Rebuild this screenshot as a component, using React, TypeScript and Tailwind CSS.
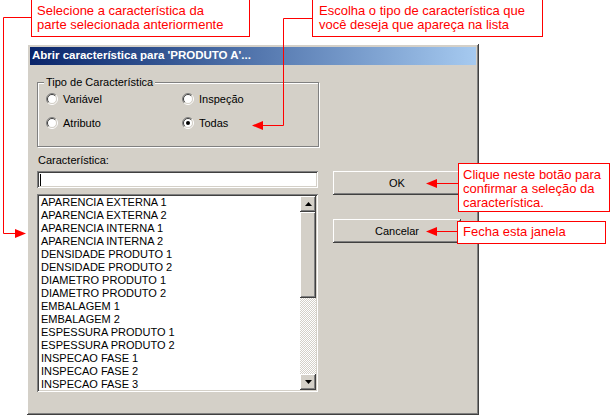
import React from 'react';

const items = [
  'APARENCIA EXTERNA 1',
  'APARENCIA EXTERNA 2',
  'APARENCIA INTERNA 1',
  'APARENCIA INTERNA 2',
  'DENSIDADE PRODUTO 1',
  'DENSIDADE PRODUTO 2',
  'DIAMETRO PRODUTO 1',
  'DIAMETRO PRODUTO 2',
  'EMBALAGEM 1',
  'EMBALAGEM 2',
  'ESPESSURA PRODUTO 1',
  'ESPESSURA PRODUTO 2',
  'INSPECAO FASE 1',
  'INSPECAO FASE 2',
  'INSPECAO FASE 3',
];

// classic win9x bevels
const raised =
  'shadow-[inset_-1px_-1px_#404040,inset_1px_1px_#ffffff,inset_-2px_-2px_#808080,inset_2px_2px_#d4d0c8]';
const sunken =
  'shadow-[inset_1px_1px_#808080,inset_-1px_-1px_#ffffff,inset_2px_2px_#404040,inset_-2px_-2px_#d4d0c8]';

function Radio({ checked }: { checked?: boolean }) {
  return (
    <svg width="12" height="12" viewBox="0 0 12 12" className="shrink-0">
      <circle cx="6" cy="6" r="4.5" fill="#ffffff" />
      <path d="M9.9 2.1 A5.5 5.5 0 0 0 2.1 9.9" fill="none" stroke="#808080" />
      <path d="M2.1 9.9 A5.5 5.5 0 0 0 9.9 2.1" fill="none" stroke="#ffffff" />
      <path d="M9.2 2.8 A4.5 4.5 0 0 0 2.8 9.2" fill="none" stroke="#404040" />
      <path d="M2.8 9.2 A4.5 4.5 0 0 0 9.2 2.8" fill="none" stroke="#d4d0c8" />
      {checked && <circle cx="6" cy="6" r="2" fill="#000000" />}
    </svg>
  );
}

function RadioOption({ label, checked }: { label: string; checked?: boolean }) {
  return (
    <div className="flex items-center gap-[5px] w-[136px]">
      <Radio checked={checked} />
      <span>{label}</span>
    </div>
  );
}

function ScrollArrow({ down }: { down?: boolean }) {
  return (
    <div className={`h-[16px] w-[16px] bg-[#d4d0c8] flex items-center justify-center ${raised}`}>
      <svg width="7" height="4" viewBox="0 0 7 4">
        {down ? <polygon points="0,0 7,0 3.5,4" fill="#000" /> : <polygon points="0,4 7,4 3.5,0" fill="#000" />}
      </svg>
    </div>
  );
}

function Callout({ className, children }: { className: string; children: React.ReactNode }) {
  return (
    <div
      className={`absolute bg-white border border-[#ff0000] text-[#ff0000] text-[13px] leading-[14px] font-['Liberation_Sans',Arial,sans-serif] ${className}`}
    >
      {children}
    </div>
  );
}

export default function App() {
  return (
    <div className="relative w-[610px] h-[416px] bg-white overflow-hidden font-['Liberation_Sans',Arial,sans-serif] text-[11px] text-black">
      <div className="pt-[44px] pl-[27px]">
        {/* dialog */}
        <div className={`w-[452px] h-[371px] bg-[#d4d0c8] p-[3px] ${raised}`}>
          <div className="h-[18px] bg-linear-to-r from-[#0a246a] to-[#a6caf0] flex items-center pl-[2px] text-white font-bold text-[11.5px]">
            Abrir característica para 'PRODUTO A'...
          </div>

          <div className="flex pl-[7px] pt-[11px]">
            {/* left column */}
            <div className="w-[281px] flex flex-col">
              <fieldset className="border border-[#808080] shadow-[inset_1px_1px_#ffffff,1px_1px_#ffffff] pb-[12px] pl-[8px]">
                <legend className="ml-[-2px] px-[2px] leading-[12px] bg-[#d4d0c8]">Tipo de Característica</legend>
                <div className="flex flex-col gap-[2px]">
                  <div className="flex h-[22px] items-center">
                    <RadioOption label="Variável" />
                    <RadioOption label="Inspeção" />
                  </div>
                  <div className="flex h-[22px] items-center">
                    <RadioOption label="Atributo" />
                    <RadioOption label="Todas" checked />
                  </div>
                </div>
              </fieldset>

              <div className="mt-[7px] leading-[13px] pl-[1px]">Característica:</div>

              <div className={`mt-[4px] h-[17px] bg-white flex items-center pl-[3px] ${sunken}`}>
                <div className="w-px h-[12px] bg-black" />
              </div>

              <div className={`mt-[6px] h-[198px] bg-white p-[2px] flex ${sunken}`}>
                <div className="flex-1 pl-[2px] leading-[13px] whitespace-nowrap overflow-hidden">
                  {items.map((it) => (
                    <div key={it}>{it}</div>
                  ))}
                </div>
                <div className="w-[16px] flex flex-col">
                  <ScrollArrow />
                  <div className={`h-[86px] bg-[#d4d0c8] ${raised}`} />
                  <div className="flex-1 bg-[image:repeating-conic-gradient(#d4d0c8_0_25%,#ffffff_0_50%)] bg-[length:2px_2px]" />
                  <ScrollArrow down />
                </div>
              </div>
            </div>

            {/* right column */}
            <div className="ml-[15px] w-[128px] flex flex-col pt-[95px] gap-[24px]">
              <button className={`h-[24px] bg-[#d4d0c8] flex items-center justify-center ${raised}`}>OK</button>
              <button className={`h-[24px] bg-[#d4d0c8] flex items-center justify-center ${raised}`}>Cancelar</button>
            </div>
          </div>
        </div>
      </div>

      {/* annotations */}
      <svg className="absolute left-0 top-0 pointer-events-none" width="610" height="416" viewBox="0 0 610 416">
        <polyline points="31,17.5 3.5,17.5 3.5,233.5 16,233.5" fill="none" stroke="#ff0000" />
        <polygon points="15,229 26,233.5 15,238" fill="#ff0000" />
        <polyline points="312,18.5 283.5,18.5 283.5,125.5 262,125.5" fill="none" stroke="#ff0000" />
        <polygon points="263,121 252,125.5 263,130" fill="#ff0000" />
        <line x1="458" y1="183.5" x2="436" y2="183.5" stroke="#ff0000" />
        <polygon points="437,179 426,183.5 437,188" fill="#ff0000" />
        <line x1="457" y1="231.5" x2="436" y2="231.5" stroke="#ff0000" />
        <polygon points="437,227 426,231.5 437,236" fill="#ff0000" />
      </svg>

      <Callout className="left-[31px] top-[-1px] w-[219px] h-[38px] pl-[5px] pt-[4px]">
        <div>Selecione a característica da</div>
        <div>parte selecionada anteriormente</div>
      </Callout>
      <Callout className="left-[312px] top-[-1px] w-[231px] h-[38px] pl-[6px] pt-[4px]">
        <div>Escolha o tipo de característica que</div>
        <div>você deseja que apareça na lista</div>
      </Callout>
      <Callout className="left-[458px] top-[163px] w-[152px] h-[49px] pl-[4px] pt-[4px]">
        <div>Clique neste botão para</div>
        <div>confirmar a seleção da</div>
        <div>característica.</div>
      </Callout>
      <Callout className="left-[457px] top-[221px] w-[149px] h-[23px] pl-[5px] pt-[3px]">
        <div>Fecha esta janela</div>
      </Callout>
    </div>
  );
}
